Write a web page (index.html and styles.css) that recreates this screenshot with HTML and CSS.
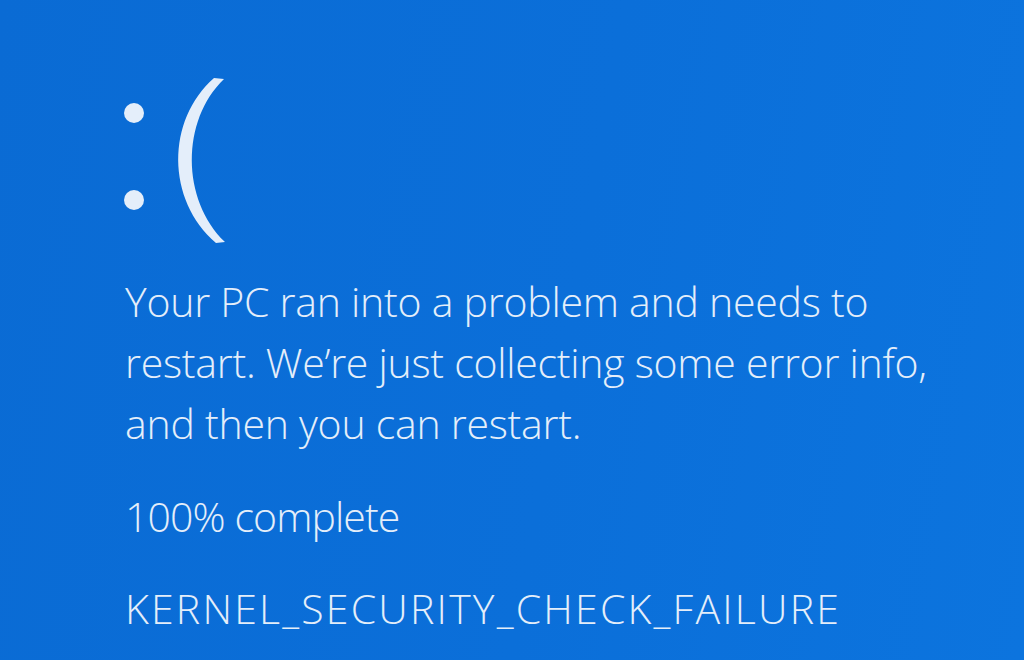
FILE: index.html
```html
<!DOCTYPE html>
<html lang="en">
<head>
<meta charset="UTF-8">
<meta name="viewport" content="width=device-width, initial-scale=1.0">
<title>Stop code</title>
<link rel="stylesheet" href="styles.css">
</head>
<body>

<div class="screen">
    <svg class="sad-face" width="110" height="180" viewBox="120 70 110 180" aria-label=":(">
        <circle cx="134" cy="113" r="10" />
        <circle cx="134" cy="200" r="10" />
        <path d="M214 78 C166 120 166 200 216 243 L225 242 C181 200 181 120 224 79 Z" />
    </svg>

    <p class="message">Your PC ran into a problem and needs to<br>restart. We’re just collecting some error info,<br>and then you can restart.</p>

    <p class="progress">100% complete</p>

    <p class="stop-code">KERNEL_SECURITY_CHECK_FAILURE</p>
</div>

</body>
</html>
```

FILE: styles.css
```css
body {
    margin: 0;
    height: 100vh;
    overflow: hidden;
    background: linear-gradient(100deg, #0a6bd4 0%, #0b6fd9 55%, #0c74de 100%);
    font-family: "Open Sans", "Noto Sans", sans-serif;
    font-weight: 300;
    color: #e4eefa;
}
.screen {
    padding: 70px 0 0 125px;
}
.sad-face {
    display: block;
    margin-left: -5px;
    fill: #e4eefa;
}
.message,
.progress,
.stop-code {
    margin: 0;
    font-size: 41px;
    line-height: 61px;
    white-space: nowrap;
}
.message {
    margin-top: 21px;
    letter-spacing: -0.25px;
}
.progress {
    margin-top: 32px;
    letter-spacing: -0.9px;
}
.stop-code {
    margin-top: 31px;
    letter-spacing: 2.2px;
}
```
